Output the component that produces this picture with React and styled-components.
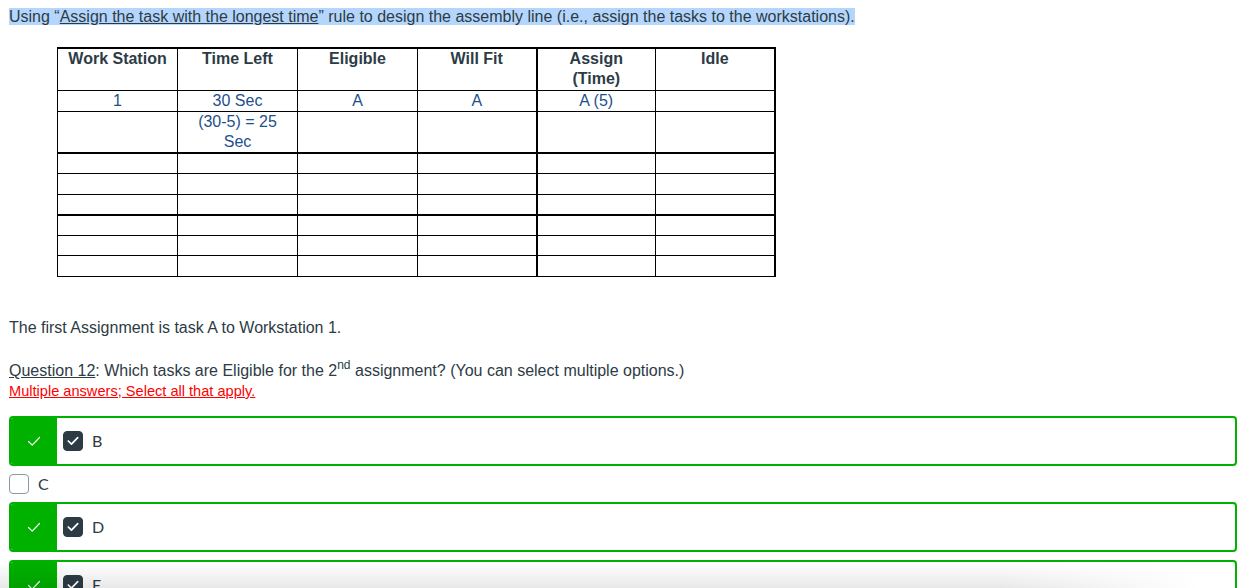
import styled, { createGlobalStyle } from 'styled-components'

const GlobalStyle = createGlobalStyle`
  html, body {
    margin: 0;
    padding: 0;
    background: #ffffff;
  }
  body {
    font-family: 'Liberation Sans', Arial, Helvetica, sans-serif;
    color: #2d3b45;
    font-size: 16px;
    overflow: hidden;
  }
`

// page
const Page = styled.main`
  padding: 5px 13px 0 9px;
  line-height: 24px;
`

const Intro = styled.p`
  margin: 0;
`

const Highlight = styled.span`
  background: #b4d6fd;
`

const Underline = styled.span`
  text-decoration: underline;
`

// table
const Table = styled.table`
  margin: 18px 0 0 48px;
  border-collapse: collapse;
  table-layout: fixed;
  width: 717px;
  line-height: 20px;
`

const Row = styled.tr`
  height: ${(p) => p.$h}px;
`

const HeadCell = styled.th`
  border: 1px solid #000;
  border-top: 2px solid #000;
  font-weight: 700;
  color: #2d3b45;
  text-align: center;
  vertical-align: top;
  padding: 0;
  ${(p) => p.$thickRight && 'border-right: 2px solid #000;'}
`

const Cell = styled.td`
  border: 1px solid #000;
  color: #1d4f8c;
  text-align: center;
  vertical-align: top;
  padding: 0;
  ${(p) => p.$thickRight && 'border-right: 2px solid #000;'}
  ${(p) => p.$thickBottom && 'border-bottom: 2px solid #000;'}
`

const Text = styled.p`
  margin: ${(p) => p.$top || 0}px 0 0 0;
`

const Sup = styled.sup`
  font-size: 12px;
  line-height: 0;
  vertical-align: 7px;
`

const Note = styled.div`
  color: #ff0000;
  font-size: 14.6px;
  line-height: 17px;
  text-decoration: underline;
`

// answers
const Options = styled.div`
  display: flex;
  flex-direction: column;
  margin-top: 16px;
`

const CorrectOption = styled.div`
  height: 50px;
  box-sizing: border-box;
  border: 2px solid #00b100;
  border-radius: 4px;
  display: flex;
  align-items: center;
  margin-bottom: 8px;
  overflow: hidden;
`

const Marker = styled.div`
  width: 46px;
  align-self: stretch;
  background: #00b100;
  display: flex;
  align-items: center;
  justify-content: center;
`

const PlainOption = styled.div`
  height: 36px;
  margin-top: -8px;
  display: flex;
  align-items: center;
`

const Box = styled.span`
  width: 20px;
  height: 20px;
  box-sizing: border-box;
  border-radius: 4px;
  display: inline-flex;
  align-items: center;
  justify-content: center;
  margin-left: ${(p) => (p.$checked ? 6 : 0)}px;
  background: ${(p) => (p.$checked ? '#2d3b45' : '#fff')};
  border: 1px solid ${(p) => (p.$checked ? '#2d3b45' : '#8b99a6')};
  flex-shrink: 0;
`

const Letter = styled.span`
  font-family: Lato, 'Liberation Sans', sans-serif;
  font-size: 16px;
  color: #2d3b45;
  margin-left: 9px;
`

const BottomShade = styled.div`
  position: fixed;
  left: 0;
  right: 0;
  bottom: 0;
  height: 26px;
  pointer-events: none;
  background: linear-gradient(to bottom, rgba(255, 255, 255, 0), rgba(0, 0, 0, 0.09));
  -webkit-mask-image: linear-gradient(to right, #000 0%, #000 80%, transparent 96%);
  mask-image: linear-gradient(to right, #000 0%, #000 80%, transparent 96%);
`

const Tick = ({ thin }) => (
  <svg width={thin ? 14 : 12} height={thin ? 11 : 10} viewBox="0 0 14 11" fill="none">
    <path
      d="M1.5 5.5 L5.2 9.2 L12.5 1.5"
      stroke="#fff"
      strokeWidth={thin ? 1.2 : 2}
      strokeLinecap="round"
      strokeLinejoin="round"
    />
  </svg>
)

const Correct = ({ label }) => (
  <CorrectOption>
    <Marker>
      <Tick thin />
    </Marker>
    <Box $checked>
      <Tick />
    </Box>
    <Letter>{label}</Letter>
  </CorrectOption>
)

const rows = [
  { h: 21, cells: ['1', '30 Sec', 'A', 'A', 'A (5)', ''] },
  { h: 41, cells: ['', '(30-5) = 25 Sec', '', '', '', ''], thickBottom: true },
  { h: 21, cells: [] },
  { h: 21, cells: [] },
  { h: 20, cells: [], thickBottom: true },
  { h: 21, cells: [] },
  { h: 20, cells: [] },
  { h: 21, cells: [] },
]

const headers = ['Work Station', 'Time Left', 'Eligible', 'Will Fit', 'Assign (Time)', 'Idle']
const widths = [120, 120, 120, 119, 119, 119]

export default function App() {
  return (
    <>
      <GlobalStyle />
      <Page>
        <Intro>
          <Highlight>
            Using “<Underline>Assign the task with the longest time</Underline>” rule to design
            the assembly line (i.e., assign the tasks to the workstations).
          </Highlight>
        </Intro>

        <Table>
          <colgroup>
            {widths.map((w, i) => (
              <col key={i} style={{ width: w }} />
            ))}
          </colgroup>
          <thead>
            <Row $h={42}>
              {headers.map((h, i) => (
                <HeadCell key={h} $thickRight={i === 3 || i === 5}>
                  {h === 'Assign (Time)' ? (
                    <>
                      Assign
                      <br />
                      (Time)
                    </>
                  ) : (
                    h
                  )}
                </HeadCell>
              ))}
            </Row>
          </thead>
          <tbody>
            {rows.map((r, ri) => (
              <Row key={ri} $h={r.h}>
                {headers.map((_, ci) => (
                  <Cell key={ci} $thickRight={ci === 3 || ci === 5} $thickBottom={r.thickBottom}>
                    {r.cells[ci] === '(30-5) = 25 Sec' ? (
                      <>
                        (30-5) = 25
                        <br />
                        Sec
                      </>
                    ) : (
                      r.cells[ci] || ''
                    )}
                  </Cell>
                ))}
              </Row>
            ))}
          </tbody>
        </Table>

        <Text $top={39}>The first Assignment is task A to Workstation 1.</Text>
        <Text $top={19}>
          <Underline>Question 12</Underline>: Which tasks are Eligible for the 2<Sup>nd</Sup>{' '}
          assignment? (You can select multiple options.)
        </Text>
        <Note>Multiple answers; Select all that apply.</Note>

        <Options>
          <Correct label="B" />
          <PlainOption>
            <Box />
            <Letter>C</Letter>
          </PlainOption>
          <Correct label="D" />
          <Correct label="E" />
        </Options>
      </Page>
      <BottomShade />
    </>
  )
}
